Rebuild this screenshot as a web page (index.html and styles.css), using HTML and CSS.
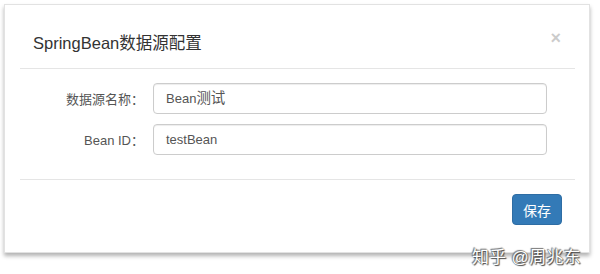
FILE: index.html
```html
<!DOCTYPE html>
<html lang="zh">
<head>
<meta charset="utf-8">
<title>SpringBean数据源配置</title>
<link rel="stylesheet" href="styles.css">
</head>
<body>
<div class="page">
  <div class="card">
    <div class="modal-header">
      <h4 class="modal-title">SpringBean数据源配置</h4>
      <span class="close">×</span>
    </div>
    <div class="modal-body">
      <div class="form-row">
        <label class="form-label">数据源名称：</label>
        <div class="form-input">Bean<span class="cjk">测试</span></div>
      </div>
      <div class="form-row">
        <label class="form-label">Bean ID：</label>
        <div class="form-input">testBean</div>
      </div>
    </div>
    <div class="modal-footer">
      <button class="btn-primary">保存</button>
    </div>
  </div>
  <div class="watermark">知乎 @周兆东</div>
</div>
</body>
</html>
```
FILE: styles.css
```css
html, body {
  margin: 0;
  padding: 0;
  background: #fff;
}
body {
  font-family: "Liberation Sans", "Noto Sans CJK SC", sans-serif;
  color: #333;
}
.page {
  position: relative;
  width: 600px;
  height: 274px;
  overflow: hidden;
}
.card {
  position: relative;
  margin: 4px 0 0 4px;
  width: 586px;
  height: 249px;
  box-sizing: border-box;
  border: 1px solid #e2e2e2;
  background: #fff;
  padding: 0 14px 0 15px;
  box-shadow: 0 3px 4px rgba(0,0,0,0.3);
}
.card::before,
.card::after {
  content: "";
  position: absolute;
  z-index: -1;
  bottom: 10px;
  width: 45%;
  height: 20px;
  box-shadow: 0 12px 8px rgba(0,0,0,0.4);
}
.card::before {
  left: 4px;
  transform: rotate(-2deg);
}
.card::after {
  right: 4px;
  transform: rotate(2deg);
}
.modal-header {
  display: flex;
  align-items: flex-start;
  height: 64px;
  box-sizing: border-box;
  padding: 28px 14px 0 13px;
  border-bottom: 1px solid #e5e5e5;
}
.modal-title {
  margin: 0;
  font-size: 16.5px;
  font-weight: normal;
  line-height: 20px;
  color: #333;
}
.close {
  margin-left: auto;
  margin-top: -5px;
  font-size: 18px;
  font-weight: bold;
  line-height: 20px;
  color: #000;
  opacity: 0.2;
}
.modal-body {
  padding: 14px 28px 24px 0;
  display: flex;
  flex-direction: column;
  gap: 10px;
}
.form-row {
  display: flex;
  align-items: center;
}
.form-label {
  width: 124px;
  text-align: right;
  font-size: 13px;
  color: #555;
  margin-right: 9px;
}
.form-input {
  flex: 1;
  height: 31px;
  box-sizing: border-box;
  border: 1px solid #ccc;
  border-radius: 4px;
  box-shadow: inset 0 1px 1px rgba(0,0,0,0.075);
  padding: 0 12px;
  font-size: 13px;
  line-height: 29px;
  color: #555;
}
.cjk {
  font-size: 14.5px;
}
.modal-footer {
  border-top: 1px solid #e5e5e5;
  padding: 14px 13px 0 0;
  display: flex;
  justify-content: flex-end;
}
.btn-primary {
  width: 50px;
  height: 31px;
  border: 1px solid #2e6da4;
  border-radius: 4px;
  background: #337ab7;
  color: #fff;
  font-family: "Liberation Sans", "Noto Sans CJK SC", sans-serif;
  font-size: 14px;
  padding: 0;
}
.watermark {
  position: absolute;
  left: 472px;
  top: 243px;
  font-size: 17px;
  color: #fff;
  letter-spacing: 0.3px;
  text-shadow: 0 0 1px #555, 1px 1px 1px #444, -1px -1px 1px #777;
}
```
